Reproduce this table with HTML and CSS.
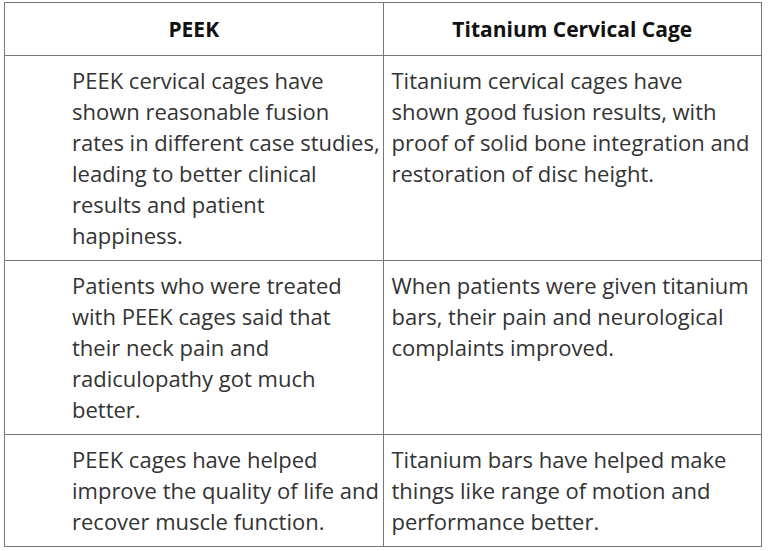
FILE: index.html
```html
<!DOCTYPE html>
<html lang="en">
<head>
<meta charset="utf-8">
<title>PEEK vs Titanium Cervical Cage</title>
<link rel="stylesheet" href="styles.css">
</head>
<body>
<table class="compare">
  <thead>
    <tr>
      <th>PEEK</th>
      <th>Titanium Cervical Cage</th>
    </tr>
  </thead>
  <tbody>
    <tr>
      <td class="peek">PEEK cervical cages have<br>shown reasonable fusion<br>rates in different case studies,<br>leading to better clinical<br>results and patient<br>happiness.</td>
      <td class="ti">Titanium cervical cages have<br>shown good fusion results, with<br>proof of solid bone integration and<br>restoration of disc height.</td>
    </tr>
    <tr>
      <td class="peek">Patients who were treated<br>with PEEK cages said that<br>their neck pain and<br>radiculopathy got much<br>better.</td>
      <td class="ti">When patients were given titanium<br>bars, their pain and neurological<br>complaints improved.</td>
    </tr>
    <tr>
      <td class="peek">PEEK cages have helped<br>improve the quality of life and<br>recover muscle function.</td>
      <td class="ti">Titanium bars have helped make<br>things like range of motion and<br>performance better.</td>
    </tr>
  </tbody>
</table>
</body>
</html>
```
FILE: styles.css
```css
html, body {
  margin: 0;
  padding: 0;
  background: #ffffff;
}
body {
  padding: 2px 0 0 4px;
  font-family: "Open Sans", "Noto Sans", sans-serif;
  color: #333333;
}
.compare {
  border-collapse: collapse;
  width: 758px;
  table-layout: fixed;
  border: 1px solid #444444;
}
.compare th,
.compare td {
  border: 1px solid #777777;
  vertical-align: top;
}
.compare th {
  height: 52px;
  padding: 0;
  font-size: 21px;
  font-weight: 700;
  color: #111111;
  text-align: center;
  vertical-align: middle;
}
.compare td {
  font-size: 22px;
  line-height: 31px;
  padding: 9px 4px 9px 8px;
  text-align: left;
  white-space: nowrap;
  overflow: visible;
}
.compare td.peek {
  padding-left: 67px;
}
```
